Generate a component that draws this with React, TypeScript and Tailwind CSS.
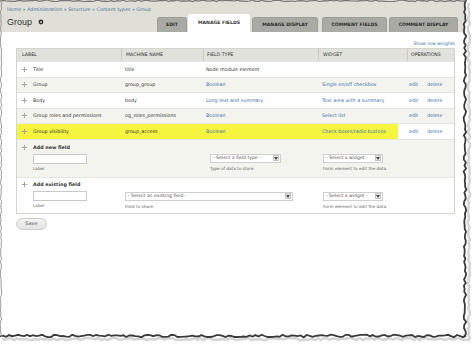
import React from "react";

const cols = "grid grid-cols-[104px_82px_115px_89px_49px]";
const link = "text-[#3d72ad]";

function rnd(i: number) {
  const x = Math.sin(i * 12.9898 + 78.233) * 43758.5453;
  return x - Math.floor(x);
}

// ragged torn-paper edge between two points
function torn(x0: number, y0: number, x1: number, y1: number, seed: number, amp: number) {
  const len = Math.hypot(x1 - x0, y1 - y0);
  const n = Math.round(len / 3);
  const nx = -(y1 - y0) / len;
  const ny = (x1 - x0) / len;
  let d = "";
  for (let i = 0; i <= n; i++) {
    const t = i / n;
    const j = (rnd(seed + i) - 0.5) * 2 * amp;
    const x = x0 + (x1 - x0) * t + nx * j;
    const y = y0 + (y1 - y0) * t + ny * j;
    d += (i === 0 ? "M" : "L") + x.toFixed(1) + " " + y.toFixed(1) + " ";
  }
  return d;
}

function Handle() {
  return (
    <svg width="7" height="7" viewBox="0 0 7 7" className="shrink-0">
      <path d="M3.5 0.8v5.4M0.8 3.5h5.4" stroke="#a8a8a2" strokeWidth="1" />
    </svg>
  );
}

function Select({ text, w }: { text: string; w: number }) {
  return (
    <div
      className="flex h-[9px] items-center border border-[#cfcfcf] bg-white pl-[2px] pr-[1px] text-[4.6px] text-[#555]"
      style={{ width: w }}
    >
      <span className="flex-1 whitespace-nowrap">{text}</span>
      <span className="flex h-[6px] w-[6px] items-center justify-center border border-[#c4c4c4] bg-[#eee]">
        <svg width="4" height="3" viewBox="0 0 4 3">
          <path d="M0 0h4L2 3z" fill="#444" />
        </svg>
      </span>
    </div>
  );
}

type Field = {
  label: string;
  machine: string;
  type: string;
  typeLink?: boolean;
  widget?: string;
  bg: string;
};

const fields: Field[] = [
  { label: "Title", machine: "title", type: "Node module element", bg: "bg-white" },
  { label: "Group", machine: "group_group", type: "Boolean", typeLink: true, widget: "Single on/off checkbox", bg: "bg-[#f3f4ee]" },
  { label: "Body", machine: "body", type: "Long text and summary", typeLink: true, widget: "Text area with a summary", bg: "bg-white" },
  { label: "Group roles and permissions", machine: "og_roles_permissions", type: "Boolean", typeLink: true, widget: "Select list", bg: "bg-[#f3f4ee]" },
  {
    label: "Group visibility",
    machine: "group_access",
    type: "Boolean",
    typeLink: true,
    widget: "Check boxes/radio buttons",
    bg: "bg-[linear-gradient(to_right,#f5f53f_381px,#ffffff_381px)]",
  },
];

const tabs = [
  { name: "EDIT", w: 30, ml: 0 },
  { name: "MANAGE FIELDS", w: 62, ml: 1, active: true },
  { name: "MANAGE DISPLAY", w: 66, ml: 2 },
  { name: "COMMENT FIELDS", w: 65, ml: 4 },
  { name: "COMMENT DISPLAY", w: 69, ml: 2 },
];

export default function App() {
  return (
    <div className="relative h-[345px] w-[474px] overflow-hidden bg-white font-['DejaVu_Sans',Verdana,sans-serif] text-[#333]">
      <div className="h-[337px] w-[465px] overflow-hidden bg-white">
        {/* header */}
        <div className="h-[32px] bg-[#dfdfd7] pl-[7px] pt-[7px]">
          <div className="h-[6px] whitespace-nowrap text-[4.8px] leading-[6px] text-[#4672a3]">
            Home » Administration » Structure » Content types » Group
          </div>
          <div className="flex h-[19px] items-end">
            <div className="flex w-[150px] items-center gap-[6px] self-center pb-[2px]">
              <span className="font-['Liberation_Sans',Arial,sans-serif] text-[9px] leading-[10px] text-[#333]">
                Group
              </span>
              <svg width="6" height="6" viewBox="0 0 6 6">
                <circle cx="3" cy="3" r="2.4" fill="#333" />
                <circle cx="3" cy="3" r="0.9" fill="#dfdfd7" />
              </svg>
            </div>
            {tabs.map((t) => (
              <div
                key={t.name}
                className={
                  t.active
                    ? "flex h-[18px] items-center justify-center rounded-t-[3px] bg-white text-[4.6px] font-bold text-[#333]"
                    : "flex h-[15px] items-center justify-center rounded-t-[3px] border border-b-0 border-[#9d9e98] bg-[#a9aaa4] text-[4.6px] font-bold text-[#2a2a2a]"
                }
                style={{ width: t.w, marginLeft: t.ml }}
              >
                {t.name}
              </div>
            ))}
          </div>
        </div>

        {/* content */}
        <div className="pl-[16px] pt-[9px]">
          <div className={`h-[7px] w-[439px] text-right text-[4.6px] leading-[6px] ${link}`}>Show row weights</div>

          <div className="w-[439px] border border-[#d3d4cd]">
            <div className={`${cols} h-[12px] bg-[#e1e2dc] text-[4.7px] uppercase text-[#333]`}>
              <div className="flex items-center pl-[5px]">Label</div>
              <div className="flex items-center border-l border-[#c6c7c0] pl-[4px]">Machine name</div>
              <div className="flex items-center border-l border-[#c6c7c0] pl-[3px]">Field type</div>
              <div className="flex items-center border-l border-[#c6c7c0] pl-[4px]">Widget</div>
              <div className="flex items-center border-l border-[#c6c7c0] pl-[3px]">Operations</div>
            </div>

            {fields.map((f) => (
              <div key={f.label} className={`${cols} h-[15.5px] items-center border-t border-[#e4e5df] text-[4.8px] ${f.bg}`}>
                <div className="flex items-center gap-[5px] pl-[4px]">
                  <Handle />
                  <span className="whitespace-nowrap">{f.label}</span>
                </div>
                <div className="whitespace-nowrap pl-[4px]">{f.machine}</div>
                <div className={`whitespace-nowrap pl-[3px] ${f.typeLink ? link : ""}`}>{f.type}</div>
                <div className={`whitespace-nowrap pl-[4px] ${link}`}>{f.widget}</div>
                <div className={`flex gap-[9px] pl-[2px] ${link}`}>
                  {f.widget ? (
                    <>
                      <span>edit</span>
                      <span>delete</span>
                    </>
                  ) : null}
                </div>
              </div>
            ))}

            {/* add new field */}
            <div className={`${cols} h-[38px] border-t border-[#e4e5df] bg-[#f3f4ee] text-[4.8px]`}>
              <div className="pl-[4px] pt-[5px]">
                <div className="flex h-[6px] items-center gap-[5px]">
                  <Handle />
                  <span className="font-bold">Add new field</span>
                </div>
                <div className="ml-[12px] mt-[3px] h-[10px] w-[54px] border border-[#c8c8c8] bg-white" />
                <div className="ml-[12px] mt-[2px] text-[4.2px] text-[#666]">Label</div>
              </div>
              <div />
              <div className="pl-[7px] pt-[14px]">
                <Select text="- Select a field type -" w={71} />
                <div className="mt-[3px] whitespace-nowrap text-[4.2px] text-[#666]">Type of data to store.</div>
              </div>
              <div className="pl-[5px] pt-[14px]">
                <Select text="- Select a widget -" w={60} />
                <div className="mt-[3px] whitespace-nowrap text-[4.2px] text-[#666]">Form element to edit the data.</div>
              </div>
              <div />
            </div>

            {/* add existing field */}
            <div className={`${cols} h-[36px] border-t border-[#e4e5df] bg-white text-[4.8px]`}>
              <div className="pl-[4px] pt-[4px]">
                <div className="flex h-[6px] items-center gap-[5px]">
                  <Handle />
                  <span className="font-bold">Add existing field</span>
                </div>
                <div className="ml-[12px] mt-[3px] h-[10px] w-[54px] border border-[#c8c8c8] bg-white" />
                <div className="ml-[12px] mt-[2px] text-[4.2px] text-[#666]">Label</div>
              </div>
              <div className="col-span-2 pl-[4px] pt-[14px]">
                <Select text="- Select an existing field -" w={168} />
                <div className="mt-[3px] whitespace-nowrap text-[4.2px] text-[#666]">Field to share</div>
              </div>
              <div className="pl-[5px] pt-[14px]">
                <Select text="- Select a widget -" w={60} />
                <div className="mt-[3px] whitespace-nowrap text-[4.2px] text-[#666]">Form element to edit the data.</div>
              </div>
              <div />
            </div>
          </div>

          <div className="mt-[4px] flex h-[12px] w-[31px] items-center justify-center rounded-full border border-[#cfcfcf] bg-[linear-gradient(#f4f4f4,#e2e2e2)] text-[5px] text-[#555]">
            Save
          </div>
        </div>
      </div>

      {/* torn paper edges */}
      <svg className="pointer-events-none absolute left-0 top-0" width="474" height="345" viewBox="0 0 474 345">
        <path d={torn(469, 3, 469, 341, 300, 1.2)} stroke="#d4d4d4" strokeWidth="2.5" fill="none" />
        <path d={torn(2, 339, 468, 339, 500, 1.2)} stroke="#d4d4d4" strokeWidth="2.5" fill="none" />
        <path d={torn(465, 0, 465, 337, 10, 1.3)} stroke="#3a3a3a" strokeWidth="1.8" fill="none" />
        <path d={torn(0, 336, 466, 336, 900, 1.3)} stroke="#3a3a3a" strokeWidth="1.8" fill="none" />
        <path d={torn(0, 0.8, 466, 0.8, 1300, 0.8)} stroke="#777" strokeWidth="1.2" fill="none" />
        <path d={torn(1, 0, 1, 337, 1700, 0.8)} stroke="#999" strokeWidth="1" fill="none" />
      </svg>
    </div>
  );
}
